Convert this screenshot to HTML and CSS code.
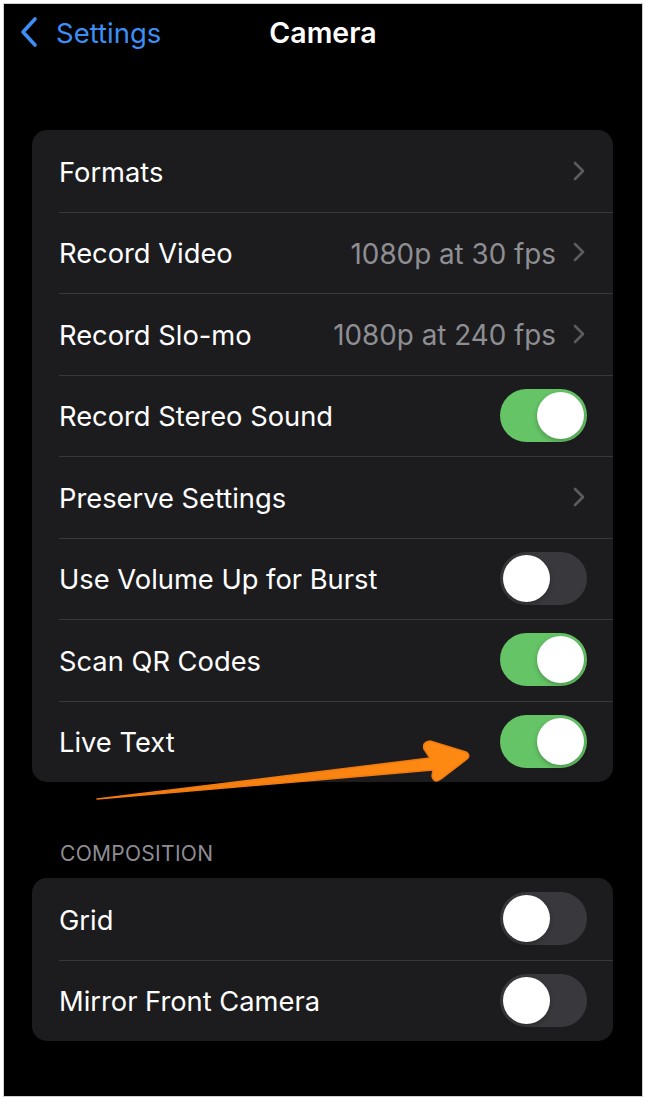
FILE: index.html
```html
<!DOCTYPE html>
<html>
<head>
<meta charset="utf-8">
<link rel="stylesheet" href="styles.css">
</head>
<body>
<div class="frame">
  <div class="nav">
    <div class="back">
      <svg class="back-chev" width="20" height="32" viewBox="0 0 20 32"><path d="M16 3 L4 16 L16 29" fill="none" stroke="#3d8ef5" stroke-width="3.6" stroke-linecap="round" stroke-linejoin="round"/></svg>
      <span>Settings</span>
    </div>
    <div class="title">Camera</div>
  </div>

  <div class="content">
    <div class="card">
      <div class="row"><span class="label">Formats</span><span class="right"><svg class="chev" width="14" height="22" viewBox="0 0 14 22"><path d="M3 3 L11 11 L3 19" fill="none" stroke="#5b5b60" stroke-width="2.6" stroke-linecap="round" stroke-linejoin="round"/></svg></span></div>
      <div class="row"><span class="label">Record Video</span><span class="right"><span class="value">1080p at 30 fps</span><svg class="chev" width="14" height="22" viewBox="0 0 14 22"><path d="M3 3 L11 11 L3 19" fill="none" stroke="#5b5b60" stroke-width="2.6" stroke-linecap="round" stroke-linejoin="round"/></svg></span></div>
      <div class="row"><span class="label">Record Slo-mo</span><span class="right"><span class="value">1080p at 240 fps</span><svg class="chev" width="14" height="22" viewBox="0 0 14 22"><path d="M3 3 L11 11 L3 19" fill="none" stroke="#5b5b60" stroke-width="2.6" stroke-linecap="round" stroke-linejoin="round"/></svg></span></div>
      <div class="row"><span class="label">Record Stereo Sound</span><span class="toggle on"><span class="knob"></span></span></div>
      <div class="row"><span class="label">Preserve Settings</span><span class="right"><svg class="chev" width="14" height="22" viewBox="0 0 14 22"><path d="M3 3 L11 11 L3 19" fill="none" stroke="#5b5b60" stroke-width="2.6" stroke-linecap="round" stroke-linejoin="round"/></svg></span></div>
      <div class="row"><span class="label">Use Volume Up for Burst</span><span class="toggle"><span class="knob"></span></span></div>
      <div class="row"><span class="label">Scan QR Codes</span><span class="toggle on"><span class="knob"></span></span></div>
      <div class="row"><span class="label">Live Text</span><span class="toggle on"><span class="knob"></span></span></div>
    </div>

    <div class="section-header">COMPOSITION</div>
    <div class="card">
      <div class="row"><span class="label">Grid</span><span class="toggle"><span class="knob"></span></span></div>
      <div class="row"><span class="label">Mirror Front Camera</span><span class="toggle"><span class="knob"></span></span></div>
    </div>
  </div>

  <svg class="arrow" width="646" height="1100" viewBox="0 0 646 1100">
    <defs>
      <linearGradient id="ag" x1="0" y1="0" x2="1" y2="0">
        <stop offset="0" stop-color="#f07a10"/>
        <stop offset="1" stop-color="#ff8a12"/>
      </linearGradient>
    </defs>
    <path d="M97 799 L430 758 L424 749 Q422 742 430 741 L466 752 Q471 755 467 759 L441 779 Q434 784 432 776 L433 770 Z" fill="url(#ag)" stroke="#f07a10" stroke-width="1.5" stroke-linejoin="round"/>
  </svg>
</div>
</body>
</html>
```

FILE: styles.css
```css
* { box-sizing: border-box; }
html, body {
  margin: 0;
  padding: 0;
  background: #ffffff;
}
body {
  font-family: Inter, "Liberation Sans", Arial, sans-serif;
  width: 646px;
  height: 1100px;
  padding: 4px;
}
.frame {
  position: relative;
  width: 638px;
  height: 1092px;
  background: #000;
  outline: 1px solid #cfcfcf;
  color: #fff;
}
.nav {
  position: relative;
  height: 58px;
  display: flex;
  align-items: center;
  justify-content: center;
}
.back {
  position: absolute;
  left: 15px;
  top: 0;
  height: 58px;
  display: flex;
  align-items: center;
  gap: 17px;
  color: #3d8ef5;
  font-size: 27.5px;
}
.back-chev { display: block; margin-top: -2px; }
.title {
  font-size: 28.5px;
  font-weight: 600;
  margin-top: -1px;
}
.content {
  padding: 68px 29px 0 28px;
}
.card {
  background: #1c1c1e;
  border-radius: 15px;
  overflow: hidden;
}
.row {
  position: relative;
  height: 81.5px;
  display: flex;
  align-items: center;
  justify-content: space-between;
  padding: 0 26px 0 27px;
}
.row + .row::before {
  content: "";
  position: absolute;
  left: 27px;
  right: 0;
  top: 0;
  height: 1px;
  background: #38383c;
}
.label {
  font-size: 27.3px;
  color: #fff;
  padding-top: 3px;
}
.right {
  display: flex;
  align-items: center;
  gap: 16px;
  margin-right: 1px;
}
.value {
  font-size: 27.8px;
  color: #8e8e93;
  padding-top: 3px;
}
.chev { display: block; }
.toggle {
  position: relative;
  width: 87px;
  height: 53px;
  border-radius: 27px;
  background: #39393d;
}
.toggle .knob {
  position: absolute;
  top: 3px;
  left: 3px;
  width: 47px;
  height: 47px;
  border-radius: 50%;
  background: #fff;
  box-shadow: 0 2px 5px rgba(0,0,0,0.25);
}
.toggle.on { background: #65c466; }
.toggle.on .knob { left: 37px; }
.section-header {
  color: #8d8d93;
  font-size: 21px;
  padding: 59px 0 12px 28px;
  letter-spacing: 0.3px;
}
.arrow {
  position: absolute;
  left: -4px;
  top: -4px;
  pointer-events: none;
}
```
